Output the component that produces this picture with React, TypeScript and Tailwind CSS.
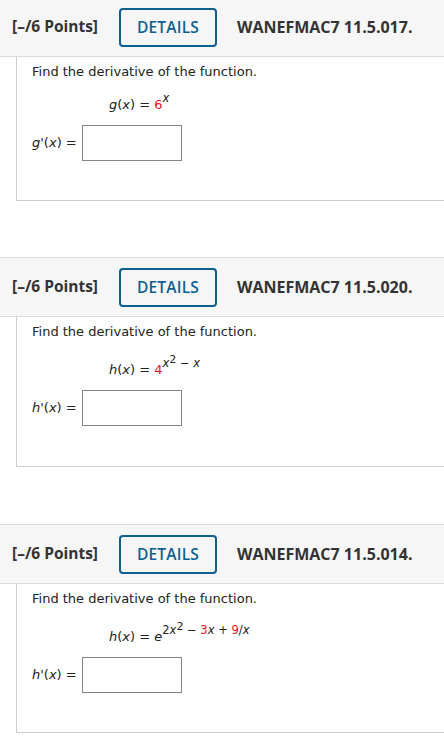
import React from "react";

const body = { fontFamily: '"DejaVu Sans", Verdana, sans-serif' };
const head = { fontFamily: '"Open Sans", "Liberation Sans", sans-serif' };

function Header({ code }: { code: string }) {
  return (
    <div
      className="flex h-[60px] items-center border-y border-[#dcdcdc] bg-[#f6f6f6] pl-3 text-[#333]"
      style={head}
    >
      <span className="text-[15.5px] font-bold">[–/6 Points]</span>
      <button className="ml-[21px] h-[39px] w-[98px] rounded-[4px] border-2 border-[#0e5f92] pt-[1px] text-[15.5px] font-semibold tracking-[0.2px] text-[#0e5f92]">
        DETAILS
      </button>
      <span className="ml-[20px] text-[16px] font-bold">{code}</span>
    </div>
  );
}

function Sup({ children }: { children: React.ReactNode }) {
  return <sup className="relative -top-[7px] text-[11.5px] not-italic">{children}</sup>;
}

function Sq() {
  return <sup className="relative -top-[4px] text-[11px]">2</sup>;
}

function Answer({ label }: { label: React.ReactNode }) {
  return (
    <div className="flex items-center text-[13px] text-[#222]">
      <span className="w-[50px]">{label}</span>
      <div className="h-[36px] w-[100px] border border-[#858585] bg-white" />
    </div>
  );
}

function Question({
  code,
  fn,
  answer,
  mathTop,
  answerTop,
  height,
}: {
  code: string;
  fn: React.ReactNode;
  answer: React.ReactNode;
  mathTop: string;
  answerTop: string;
  height: string;
}) {
  return (
    <section>
      <Header code={code} />
      <div className={`ml-4 border-b border-l border-[#cdcdcd] pl-[15px] pt-[7px] ${height}`} style={body}>
        <p className="text-[13px] leading-[16px] text-[#222]">Find the derivative of the function.</p>
        <div className={`${mathTop} pl-[77px] text-[13px] leading-[16px] text-[#222]`}>{fn}</div>
        <div className={answerTop}>
          <Answer label={answer} />
        </div>
      </div>
    </section>
  );
}

export default function App() {
  return (
    <div className="w-[444px] overflow-hidden bg-white">
      <div className="-mt-[3px]">
        <Question
          code="WANEFMAC7 11.5.017."
          mathTop="mt-[17px]"
          answerTop="mt-[12px]"
          height="h-[144px]"
          fn={
            <span>
              <i>g</i>(<i>x</i>) = <span className="text-[#e8141c]">6</span>
              <Sup>
                <i>x</i>
              </Sup>
            </span>
          }
          answer={
            <span>
              <i>g</i>'(<i>x</i>) =
            </span>
          }
        />
      </div>
      <div className="mt-[56px]">
        <Question
          code="WANEFMAC7 11.5.020."
          mathTop="mt-[22px]"
          answerTop="mt-[12px]"
          height="h-[150px]"
          fn={
            <span>
              <i>h</i>(<i>x</i>) = <span className="text-[#e8141c]">4</span>
              <Sup>
                <i>x</i>
                <Sq /> − <i>x</i>
              </Sup>
            </span>
          }
          answer={
            <span>
              <i>h</i>'(<i>x</i>) =
            </span>
          }
        />
      </div>
      <div className="mt-[57px]">
        <Question
          code="WANEFMAC7 11.5.014."
          mathTop="mt-[22px]"
          answerTop="mt-[12px]"
          height="h-[149px]"
          fn={
            <span>
              <i>h</i>(<i>x</i>) = <i>e</i>
              <Sup>
                2<i>x</i>
                <Sq /> − <span className="text-[#e8141c]">3</span>
                <i>x</i> + <span className="text-[#e8141c]">9</span>/<i>x</i>
              </Sup>
            </span>
          }
          answer={
            <span>
              <i>h</i>'(<i>x</i>) =
            </span>
          }
        />
      </div>
    </div>
  );
}
